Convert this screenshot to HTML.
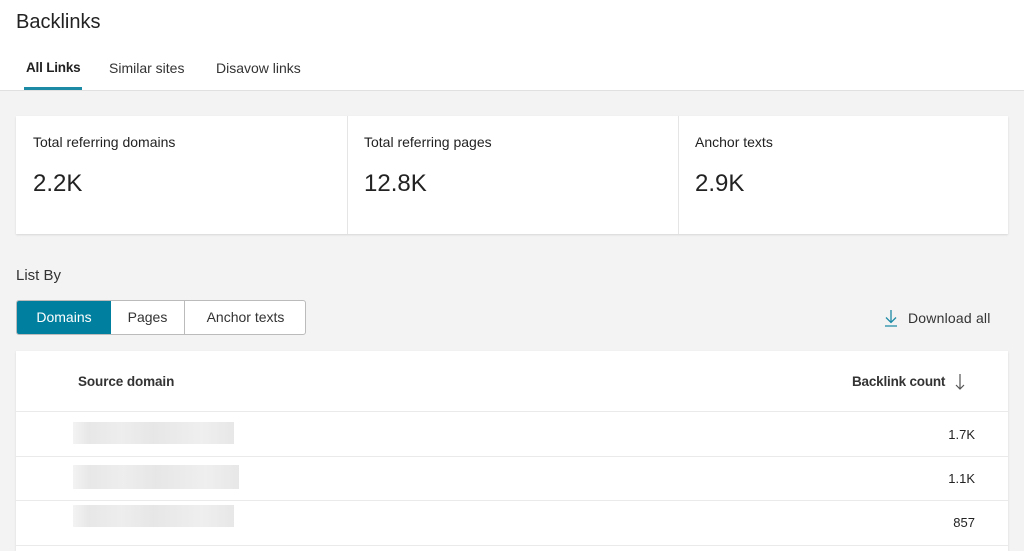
<!DOCTYPE html>
<html><head><style>
*{margin:0;padding:0;box-sizing:border-box}
body{width:1024px;height:549px;overflow:hidden;background:#f3f3f3;font-family:"Liberation Sans",sans-serif;color:#222;position:relative}
.abs{position:absolute}
.hdr{left:0;top:0;width:1024px;height:91px;background:#fff;border-bottom:1px solid #e0e0e0}
.card{top:116px;height:118px;background:#fff;box-shadow:0 1px 2px rgba(0,0,0,.12)}
.lbl{font-size:14px;color:#222}
.num{font-size:24px;color:#222}
.tbl{left:16px;top:351px;width:992px;height:200px;background:#fff;box-shadow:0 1px 2px rgba(0,0,0,.12)}
.row{left:0;width:992px;border-top:1px solid #eaeaea}
.blur{background:linear-gradient(90deg,#eee,#ddd 10%,#e6e6e6 30%,#dcdcdc 50%,#e8e8e8 80%,#ddd)}
</style></head><body>
<div class="abs hdr">
<div class="abs" style="left:16px;top:11px;font-size:20px;color:#222">Backlinks</div>
<div class="abs" style="left:26px;top:60px;font-size:13.5px;font-weight:bold;letter-spacing:-0.2px">All Links</div>
<div class="abs" style="left:24px;top:87px;width:58px;height:3px;background:#1c8aa5"></div>
<div class="abs" style="left:109px;top:60px;font-size:14px;color:#333">Similar sites</div>
<div class="abs" style="left:216px;top:60px;font-size:14px;color:#333">Disavow links</div>
</div>
<div class="abs card" style="left:16px;width:992px"></div>
<div class="abs" style="left:347px;top:116px;width:1px;height:118px;background:#e5e5e5"></div>
<div class="abs" style="left:678px;top:116px;width:1px;height:118px;background:#e5e5e5"></div>
<div class="abs lbl" style="left:33px;top:134px">Total referring domains</div>
<div class="abs num" style="left:33px;top:170px">2.2K</div>
<div class="abs lbl" style="left:364px;top:134px">Total referring pages</div>
<div class="abs num" style="left:364px;top:170px">12.8K</div>
<div class="abs lbl" style="left:695px;top:134px">Anchor texts</div>
<div class="abs num" style="left:695px;top:170px">2.9K</div>
<div class="abs" style="left:16px;top:267px;font-size:15px;color:#333">List By</div>
<div class="abs" style="left:16px;top:300px;width:290px;height:35px;border:1px solid #bbb;border-radius:3px;background:#fff;overflow:hidden;font-size:14px">
<div class="abs" style="left:0;top:0;width:94px;height:33px;background:#007f9f;color:#fff;text-align:center;line-height:33px">Domains</div>
<div class="abs" style="left:94px;top:0;width:74px;height:33px;border-right:1px solid #bbb;text-align:center;line-height:33px;color:#333">Pages</div>
<div class="abs" style="left:168px;top:0;width:121px;height:33px;text-align:center;line-height:33px;color:#333">Anchor texts</div>
</div>
<svg class="abs" style="left:884px;top:309px" width="14" height="18" viewBox="0 0 14 18"><path d="M7 1V13M2 8.5L7 13.5 12 8.5M1 17H13" stroke="#1c8aa5" stroke-width="1.3" fill="none"/></svg>
<div class="abs" style="left:908px;top:310px;font-size:14px;color:#333;letter-spacing:0.2px">Download all</div>
<div class="abs tbl">
<div class="abs" style="left:62px;top:23px;font-size:13.5px;font-weight:bold;color:#333;letter-spacing:-0.1px">Source domain</div>
<div class="abs" style="left:836px;top:23px;font-size:13.5px;font-weight:bold;color:#333;letter-spacing:-0.2px">Backlink count</div>
<svg class="abs" style="left:939px;top:22px" width="10" height="18" viewBox="0 0 10 18"><path d="M5 1V16M1 12L5 16 9 12" stroke="#555" stroke-width="1.2" fill="none"/></svg>
<div class="abs row" style="top:60px;height:45px"><div class="abs blur" style="left:57px;top:10px;width:161px;height:22px;opacity:.7"></div><div class="abs" style="right:33px;top:15px;font-size:13px">1.7K</div></div>
<div class="abs row" style="top:105px;height:44px"><div class="abs blur" style="left:57px;top:8px;width:166px;height:24px;opacity:.7"></div><div class="abs" style="right:33px;top:14px;font-size:13px">1.1K</div></div>
<div class="abs row" style="top:149px;height:45px"><div class="abs blur" style="left:57px;top:4px;width:161px;height:22px;opacity:.7"></div><div class="abs" style="right:33px;top:14px;font-size:13px">857</div></div>
<div class="abs row" style="top:194px;height:6px"></div>
</div>
</body></html>
